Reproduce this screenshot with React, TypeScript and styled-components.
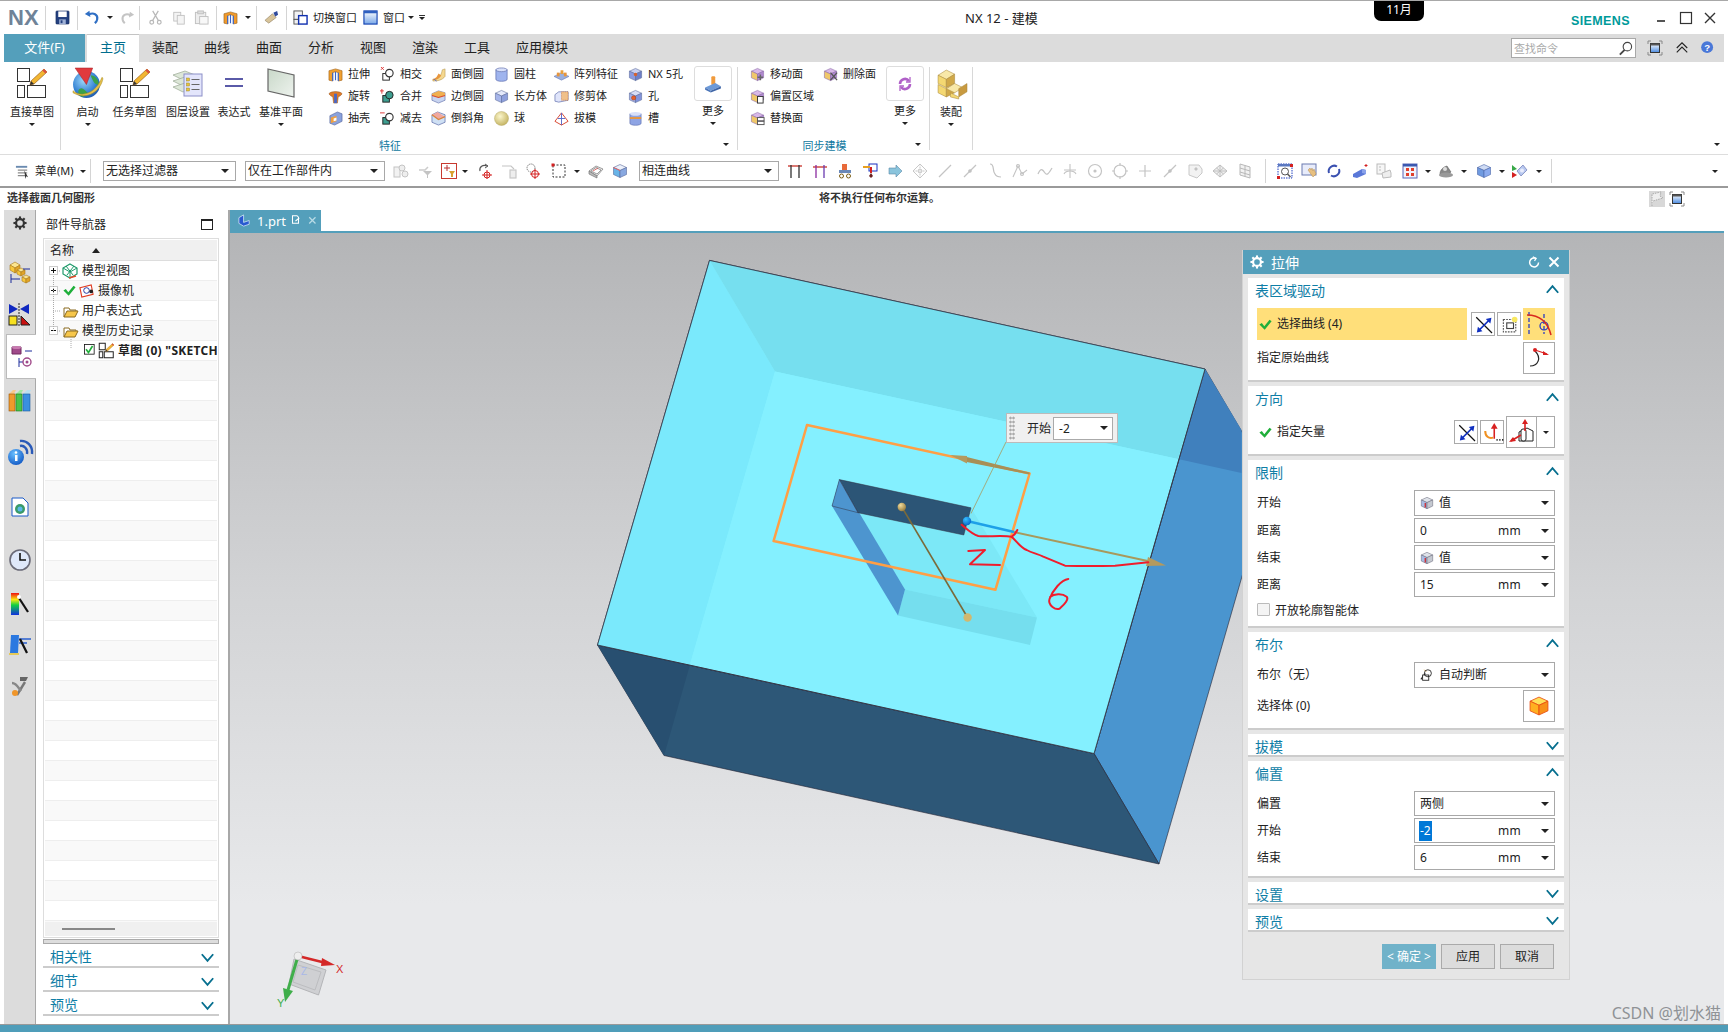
import React from "react";
import styled, { createGlobalStyle } from "styled-components";

const Global = createGlobalStyle`
  html, body { margin: 0; padding: 0; background: #fff; }
  * { box-sizing: border-box; }
  body { font-family: "Noto Sans", "Noto Sans CJK SC", sans-serif; color: #222; }
`;

const Frame = styled.div`
  width: 1728px; height: 1032px; overflow: hidden; position: relative;
  display: flex; flex-direction: column; background: #fff; border-top: 1px solid #a8a8a8;
  font-family: "Noto Sans", "Noto Sans CJK SC", sans-serif;
`;
const TitleBar = styled.div`display: flex; align-items: center; height: 33px; padding: 0 12px 0 8px; flex: none;`;
const Logo = styled.div`width: 37px; font: bold 22px/33px "Liberation Sans", sans-serif; color: #6f8398;`;
const VSep = styled.div<{ $h?: number; $ml?: number }>`
  width: 1px; height: ${p => p.$h ?? 24}px; background: #d4d4d4; flex: none; margin-left: ${p => p.$ml ?? 0}px;
`;
const Slot = styled.div<{ $w: number; $ml?: number }>`
  width: ${p => p.$w}px; margin-left: ${p => p.$ml ?? 0}px; flex: none;
  display: flex; align-items: center; justify-content: center;
`;
const Caret = styled.i<{ $c?: string; $s?: number }>`
  display: block; flex: none; width: 0; height: 0;
  border-left: ${p => p.$s ?? 3}px solid transparent; border-right: ${p => p.$s ?? 3}px solid transparent;
  border-top: ${p => p.$s ?? 3}px solid ${p => p.$c ?? "#222"};
`;
const QuickText = styled.span<{ $w: number }>`width: ${p => p.$w}px; font-size: 11px; line-height: 14px; white-space: nowrap; flex: none;`;
const OverflowCaret = styled.div`display: flex; flex-direction: column; align-items: center; gap: 1px; width: 10px; &::before { content: ""; width: 6px; height: 1px; background: #333; }`;
const AppTitle = styled.div`margin-left: 538px; font-size: 13px; line-height: 18px; white-space: nowrap;`;
const RightGroup = styled.div`margin-left: auto; display: flex; align-items: center;`;
const Siemens = styled.div`font: bold 12.5px/16px "Liberation Sans", sans-serif; color: #009a9a; letter-spacing: 0.4px; margin-top: 7px; margin-right: 27px;`;
const WinBtn = styled.div<{ $ml?: number }>`margin-left: ${p => p.$ml ?? 0}px; display: flex;`;
const MonthBadge = styled.div`
  position: absolute; left: 1374px; top: -1px; width: 50px; height: 21px; background: #000; color: #fff;
  border-radius: 0 0 7px 7px; font-size: 12px; line-height: 20px; text-align: center;
`;

const TabRow = styled.div`
  height: 28px; margin: 0 4px; background: #dcdcdc; display: flex; align-items: stretch; flex: none;
`;
const FileTab = styled.div`width: 81px; margin-right: 2px; background: #549fbb; color: #fff; font-size: 13px; line-height: 26px; text-align: center;`;
const RibbonTab = styled.div<{ $active?: boolean; $w?: number }>`
  width: ${p => p.$w ?? 52}px; text-align: center; font-size: 13px; line-height: 25px;
  color: ${p => p.$active ? "#006e8e" : "#222"}; background: ${p => p.$active ? "#fff" : "transparent"};
  border-top: 1px solid ${p => p.$active ? "#c4c4c4" : "transparent"};
`;
const SearchBox = styled.div`
  margin: 4px 0 0 auto; width: 125px; height: 20px; background: #fff; border: 1px solid #a8a8a8;
  display: flex; align-items: center; justify-content: space-between; padding: 0 2px;
  font-size: 11px; color: #aaa;
`;
const TabTools = styled.div`display: flex; align-items: center; margin: 0 9px 0 11px; gap: 12px;`;

const Ribbon = styled.div`height: 93px; padding: 5px 0 4px 4px; display: flex; flex: none; border-bottom: 1px solid #ddd;`;
const Group = styled.div<{ $w?: number; $grow?: boolean; $plain?: boolean }>`
  width: ${p => p.$w ? p.$w + "px" : "auto"}; flex: ${p => p.$grow ? 1 : "none"}; display: flex; flex-direction: column;
  border-right: ${p => p.$plain ? "none" : "1px solid #d8d8d8"}; position: relative;
`;
const GroupBody = styled.div<{ $pl?: number }>`flex: 1; display: flex; padding-left: ${p => p.$pl ?? 0}px; min-height: 0;`;
const GroupFoot = styled.div`height: 10px; line-height: 12px; font-size: 11px; color: #0f78a0; text-align: center; position: relative; padding-right: 18px;`;
const Launcher = styled.div`position: absolute; right: 8px; top: 3px;`;
const Big = styled.div<{ $w: number; $ml?: number }>`
  width: ${p => p.$w}px; margin-left: ${p => p.$ml ?? 0}px; flex: none; display: flex; flex-direction: column; align-items: center; padding-top: 1px;
`;
const BigIcon = styled.div`height: 30px; display: flex; align-items: center; justify-content: center;`;
const BigText = styled.div`font-size: 11px; line-height: 14px; margin-top: 7px; white-space: nowrap;`;
const BigCaret = styled.div`margin-top: 4px;`;
const SmallCol = styled.div<{ $w: number; $ml?: number }>`
  width: ${p => p.$w}px; margin-left: ${p => p.$ml ?? 0}px; flex: none; display: flex; flex-direction: column; gap: 8px;
`;
const SmallCmd = styled.div`height: 14px; display: flex; align-items: center; gap: 5px; font-size: 11px; line-height: 14px; white-space: nowrap;`;
const MoreBtn = styled.div<{ $w: number }>`width: ${p => p.$w}px; margin-top: -1px; flex: none; display: flex; flex-direction: column; align-items: center;`;
const MoreBox = styled.div`width: 100%; height: 35px; border: 1px solid #ddd; border-radius: 3px; display: flex; align-items: center; justify-content: center;`;
const MoreText = styled.div`font-size: 11px; line-height: 14px; margin-top: 3px;`;

const Toolbar = styled.div`
  height: 33px; display: flex; align-items: center; padding: 1px 0 0 15px; flex: none; border-bottom: 2px solid #9a9a9a;
`;
const MenuText = styled.span`font-size: 11px; line-height: 14px; margin-left: 5px; width: 41px; white-space: nowrap;`;
const ToolCombo = styled.div<{ $w: number; $ml?: number }>`
  width: ${p => p.$w}px; margin-left: ${p => p.$ml ?? 0}px; height: 20px; flex: none; border: 1px solid #a8a8a8; background: #fff;
  display: flex; align-items: center; justify-content: space-between; padding: 0 6px 0 2px; font-size: 12px; line-height: 16px;
`;
const ToolEnd = styled.div`margin-left: auto; margin-right: 10px;`;

const StatusRow = styled.div`height: 22px; flex: none; padding: 0 43px 0 7px; display: flex; align-items: center; font-size: 11px; font-weight: 700; color: #333;`;
const StatusText = styled.span<{ $w?: number }>`width: ${p => p.$w ? p.$w + "px" : "auto"}; white-space: nowrap; margin-top: -4px;`;
const StatusIcons = styled.div`margin-left: auto; display: flex; gap: 4px;`;

const Main = styled.div`flex: 1; min-height: 0; display: flex; padding: 0 4px;`;
const Strip = styled.div`width: 32px; flex: none; background: #dcdcdc; border-right: 1px solid #a8a8a8; display: flex; flex-direction: column; align-items: center;`;
const StripItem = styled.div<{ $mt: number; $h?: number; $active?: boolean }>`
  width: ${p => p.$active ? 30 : 32}px; height: ${p => p.$h ?? 32}px; margin-top: ${p => p.$mt}px; flex: none;
  display: flex; align-items: center; justify-content: center; align-self: ${p => p.$active ? "flex-end" : "center"};
  background: ${p => p.$active ? "#fff" : "transparent"};
  ${p => p.$active ? "border: 1px solid #bbb; border-right: none; margin-right: -1px;" : ""}
`;
const Nav = styled.div`width: 194px; flex: none; display: flex; flex-direction: column; border-right: 2px solid #a8a8a8;`;
const NavTitle = styled.div`height: 28px; flex: none; display: flex; align-items: center; justify-content: space-between; padding: 0 15px 0 10px; font-size: 12px;`;
const MaxSquare = styled.div`width: 12px; height: 11px; border: 1px solid #222; border-top-width: 2px;`;
const Tree = styled.div`position: relative; flex: none; height: 700px; margin: 0 9px 0 7px; border: 1px solid #ddd; display: flex; flex-direction: column; overflow: hidden; padding: 1px;`;
const TreeHead = styled.div`height: 21px; flex: none; background: #f0f0f0; border-bottom: 1px solid #ddd; display: flex; align-items: center; padding-left: 5px; gap: 18px; font-size: 12px;`;
const UpTri = styled.i`width: 0; height: 0; border-left: 4px solid transparent; border-right: 4px solid transparent; border-bottom: 5px solid #222;`;
const Rows = styled.div`flex: 1; min-height: 0; overflow: hidden;`;
const Row = styled.div<{ $odd: boolean }>`
  height: 20px; background: ${p => p.$odd ? "#f9f9f9" : "#fff"}; border-bottom: 1px solid #eee;
  display: flex; align-items: center; font-size: 12px; line-height: 14px; white-space: nowrap; overflow: hidden;
`;
const Pad = styled.span<{ $w: number }>`width: ${p => p.$w}px; flex: none; display: flex; align-items: center;`;
const Expand = styled.span`width: 9px; height: 9px; border: 1px solid #ccc; background: #fff; position: relative; display: block; font-size: 0;
  &::before { content: ""; position: absolute; left: 1px; right: 1px; top: 3px; height: 1px; background: #111; }`;
const ExpandPlus = styled(Expand)`&::after { content: ""; position: absolute; top: 1px; bottom: 1px; left: 3px; width: 1px; background: #111; }`;
const SketchText = styled.span`font-weight: 700; letter-spacing: 0.3px;`;
const TreeLines = styled.svg`position: absolute; left: 0; top: 0; pointer-events: none;`;
const ScrollRow = styled.div`height: 14px; flex: none; background: #f0f0f0; display: flex; align-items: center; padding-left: 17px;`;
const Thumb = styled.div`width: 53px; height: 2px; background: #888;`;
const SplitBar = styled.div`height: 5px; flex: none; margin: 1px 9px 0 7px; background: #ddd; border: 1px solid #aaa;`;
const NavSection = styled.div`
  height: 24px; flex: none; margin: 0 9px 0 7px; border-bottom: 2px solid #ccc; display: flex; align-items: center; justify-content: space-between;
  padding: 4px 5px 0 7px; font-size: 14px; line-height: 20px; color: #0f7ea6;
`;

const Right = styled.div`flex: 1; min-width: 0; display: flex; flex-direction: column;`;
const DocTabs = styled.div`height: 23px; flex: none; display: flex; border-bottom: 2px solid #549fbb;`;
const DocTab = styled.div`width: 91px; height: 21px; background: #549fbb; color: #fff; display: flex; align-items: center; gap: 5px; padding-left: 7px; font-size: 13px;`;
const View = styled.div`flex: 1; min-height: 0; position: relative; background: linear-gradient(180deg, #b4b5b7 0%, #d2d3d5 45%, #e8e9eb 85%, #e8e9eb 100%); overflow: hidden;`;
const Canvas = styled.svg`position: absolute; left: 0; top: 0; display: block;`;
const Watermark = styled.div`position: absolute; right: 3px; bottom: 1px; font-size: 16px; line-height: 20px; color: #8f9296;`;
const Bottom = styled.div`height: 8px; flex: none; background: #4f9db9; border-top: 1px solid #999;`;

const Popup = styled.div`
  position: absolute; left: 776px; top: 180px; width: 112px; height: 30px; background: #f0f0f0; border: 1px solid #bbb;
  display: flex; align-items: center; font-size: 12px; padding: 0 4px 0 2px;
`;
const Grip = styled.div`width: 6px; height: 24px; background-image: radial-gradient(#aaa 1px, transparent 1.2px); background-size: 3px 4px; margin-right: 12px;`;
const PopupField = styled.div`margin-left: 2px; flex: 1; height: 23px; border: 1px solid #aaa; background: #fff; display: flex; align-items: center; justify-content: space-between; padding: 0 4px 0 5px;`;

const Dialog = styled.div`
  position: absolute; left: 1012px; top: 17px; width: 328px; height: 730px; background: #e6e6e6; border: 1px solid #d2d2d2; border-top: none;
  display: flex; flex-direction: column;
`;
const DlgHead = styled.div`height: 24px; flex: none; background: #549fbb; color: #fff; display: flex; align-items: center; padding: 0 9px 0 7px; gap: 7px; font-size: 14px;`;
const DlgHeadIcons = styled.div`margin-left: auto; display: flex; gap: 7px; align-items: center;`;
const DlgBody = styled.div`padding: 4px 5px 0; display: flex; flex-direction: column; gap: 4px;`;
const Section = styled.div`background: #fff; border-bottom: 2px solid #ccc; display: flex; flex-direction: column;`;
const SecHead = styled.div<{ $closed?: boolean }>`
  height: ${p => p.$closed ? 21 : 26}px; line-height: 26px; flex: none; padding: 0 5px 0 7px; display: flex; justify-content: space-between;
  font-size: 14px; color: #0f7ea6;
`;
const SecIcon = styled.div`height: 26px; display: flex; align-items: center; margin-top: -2px;`;
const SecBody = styled.div<{ $pb: number }>`padding: 4px 9px ${p => p.$pb}px; display: flex; flex-direction: column; gap: 2px;`;
const FormRow = styled.div<{ $h: number }>`height: ${p => p.$h}px; display: flex; align-items: center; font-size: 12px; line-height: 16px; gap: 2px;`;
const RowLabel = styled.span`margin-right: auto; white-space: nowrap;`;
const Highlight = styled.div`width: 210px; height: 32px; background: #ffdf7a; display: flex; align-items: center; padding-left: 2px; gap: 5px; margin-right: 2px; font-size: 12px;`;
const CheckLabel = styled.div`display: flex; align-items: center; gap: 5px; padding-left: 2px; margin-right: auto;`;
const IconBtn = styled.div<{ $s?: number; $yellow?: boolean; $h?: number }>`
  width: ${p => p.$s ?? 24}px; height: ${p => p.$h ?? 24}px; flex: none; display: flex; align-items: center; justify-content: center;
  background: ${p => p.$yellow ? "#ffdf7a" : "#fff"}; border: 1px solid ${p => p.$yellow ? "#ffdf7a" : "#aaa"};
`;
const SplitBtn = styled.div`height: 32px; width: 49px; flex: none; border: 1px solid #aaa; display: flex; align-items: stretch;`;
const SplitMain = styled.div`flex: 1; display: flex; align-items: center; justify-content: center; border-right: 1px solid #aaa;`;
const SplitArrow = styled.div`width: 17px; display: flex; align-items: center; justify-content: center;`;
const Field = styled.div`
  width: 141px; height: 100%; flex: none; border: 1px solid #a8a8a8; background: #fff; display: flex; align-items: center; padding: 0 5px 0 5px; gap: 5px; font-size: 12px;
`;
const FieldMain = styled.span`flex: 1; display: flex; align-items: center; gap: 5px; white-space: nowrap; height: 100%;`;
const Unit = styled.span`width: 38px; font-size: 12px; letter-spacing: 0.3px;`;
const Sel = styled.span`background: #0078d7; color: #fff; padding: 0 1px; line-height: 20px; margin-left: -1px;`;
const CheckRow = styled.div`display: flex; align-items: center; gap: 5px; margin-top: 4px; height: 13px; font-size: 12px;`;
const CheckBox = styled.span`width: 13px; height: 13px; border: 1px solid #bbb; background: #f4f4f4; border-radius: 1px;`;
const DlgFoot = styled.div`margin: 12px 0 0 0; padding-right: 15px; display: flex; justify-content: flex-end; gap: 5px;`;
const Btn = styled.div<{ $primary?: boolean }>`
  width: 54px; height: 25px; text-align: center; font-size: 12px; line-height: 23px;
  background: ${p => p.$primary ? "#70b2c9" : "#dcdcdc"}; color: ${p => p.$primary ? "#fff" : "#222"};
  border: 1px solid ${p => p.$primary ? "#70b2c9" : "#aaa"};
`;

const Svg = styled.svg`display: block; flex: none; overflow: visible;`;
const Ic: React.FC<{ s?: number; v?: number; children: React.ReactNode }> = ({ s = 16, v = 16, children }) => (
  <Svg width={s} height={s} viewBox={`0 0 ${v} ${v}`} fill="none">{children}</Svg>
);

const Cube: React.FC<{ t: string; l: string; r: string; k?: string }> = ({ t, l, r, k = "#5a6a9a" }) => (
  <g stroke={k} strokeWidth="0.6" strokeLinejoin="round">
    <polygon points="8,1.5 14.5,4.5 8,7.5 1.5,4.5" fill={t} />
    <polygon points="1.5,4.5 8,7.5 8,14.5 1.5,11.5" fill={l} />
    <polygon points="14.5,4.5 8,7.5 8,14.5 14.5,11.5" fill={r} />
  </g>
);
const Ring = () => <circle cx="10" cy="6.5" r="4" fill="#fff" stroke="#333" strokeWidth="1.2" />;
const SqBox = ({ f = "none" }: { f?: string }) => <rect x="3" y="7" width="7" height="7" fill={f} stroke="#222" strokeWidth="1" />;
const Pencil = () => <g><polygon points="27,1 30,4 17,16 13,17 14,13" fill="#f2b632" stroke="#a2661c" strokeWidth="0.7" /><polygon points="27,1 30,4 28.3,5.6 25.3,2.6" fill="#d9503f" /><polygon points="14,13 17,16 13,17" fill="#333" /></g>;
const SketchBig = () => (
  <Ic s={30} v={30}>
    <rect x="0.5" y="0.5" width="12" height="13" stroke="#333" />
    <rect x="0.5" y="17.5" width="7" height="12" stroke="#333" />
    <rect x="10.5" y="17.5" width="18" height="12" stroke="#333" />
    <Pencil />
  </Ic>
);
const GlobeBig = () => (
  <Ic s={31} v={30}>
    <defs><radialGradient id="gl" cx="0.4" cy="0.35" r="0.75"><stop offset="0" stopColor="#9fd8f8" /><stop offset="0.65" stopColor="#2f7ed2" /><stop offset="1" stopColor="#1c4f9e" /></radialGradient></defs>
    <circle cx="14" cy="16" r="13" fill="url(#gl)" />
    <path d="M6 22c3-5 6-1 10 3l-6 3c-3-1-4-3-4-6zM18 7c4 0 8 4 8 9-4 1-6-4-8-9z" fill="#3aa14a" />
    <path d="M1 22c8 7 22 3 28-13l1 1c-2 12-15 22-29 14z" fill="#e6c04a" stroke="#a88a20" strokeWidth="0.5" />
    <polygon points="3,0 20,0 14,16" fill="#e03a3e" stroke="#a31c22" strokeWidth="0.5" />
  </Ic>
);
const LayersBig = () => (
  <Ic s={30} v={30}>
    {[3, 9, 15].map(y => <polygon key={y} points={`0,${y + 4} 12,${y} 22,${y + 4} 10,${y + 9}`} fill="#dde7d8" stroke="#9aa794" strokeWidth="0.7" />)}
    <rect x="11" y="6" width="18" height="22" fill="#e3e5fb" stroke="#8c8fc8" />
    {[10, 15, 20].map(y => <g key={y}><rect x="13.5" y={y} width="3" height="3" fill="#e7c43e" stroke="#8c7a20" strokeWidth="0.4" /><rect x="18.5" y={y + 1} width="8" height="1" fill="#666" /></g>)}
  </Ic>
);
const EqBig = () => <Ic s={18} v={18}><rect x="0" y="4" width="18" height="2" fill="#5a5aa8" /><rect x="0" y="11" width="18" height="2" fill="#5a5aa8" /></Ic>;
const PlaneBig = () => (
  <Ic s={30} v={30}>
    <defs><linearGradient id="pl" x1="0" y1="0" x2="1" y2="1"><stop offset="0" stopColor="#c9d8c9" /><stop offset="1" stopColor="#eef3ee" /></linearGradient></defs>
    <polygon points="2,1 28,7 28,29 2,23" fill="url(#pl)" stroke="#666" strokeWidth="1.2" />
  </Ic>
);
const AsmBig = () => (
  <Ic s={31} v={30}>
    <g stroke="#a8873a" strokeWidth="0.5">
      <polygon points="2,7 10,2 18,6 10,11" fill="#f8e8a8" /><polygon points="2,7 10,11 10,19 2,15" fill="#f4d872" /><polygon points="18,6 10,11 10,19 18,15" fill="#d0a848" />
      <polygon points="2,16 10,20 10,28 2,24" fill="#f4d872" /><polygon points="10,20 18,16 18,24 10,28" fill="#d0a848" />
      <polygon points="10,20 18,15 26,19 18,24" fill="#f8e8a8" /><polygon points="18,24 26,19 26,27 18,32" fill="#c89a40" transform="translate(4 -4)" />
      <polygon points="14,24 22,28 22,30 14,28" fill="#f4d872" />
    </g>
  </Ic>
);

const icons: Record<string, React.ReactNode> = {
  extrude: <g stroke="#9a5a10" strokeWidth="0.6"><path d="M1 4l7-2 7 2v10l-4 1V6L8 5 5 6v9l-4-1z" fill="#f0a030" /><path d="M5 6v9M8 5v9M11 6v9" stroke="#3a66c8" strokeWidth="1.2" /></g>,
  revolve: <g><path d="M1 5c2-3 12-3 14 0-1 2-3 3-4 3l-1 7H6L5 8C4 8 2 7 1 5z" fill="#e07a28" stroke="#8a4a14" strokeWidth="0.5" /><rect x="6.5" y="5" width="3" height="10" fill="#4a68c4" /></g>,
  shell: <g><polygon points="2,5 10,1 15,3 15,11 7,15 2,13" fill="#8aa2dc" stroke="#4a5a94" strokeWidth="0.6" /><polygon points="3,7 9,5 9,11 3,13" fill="#f0a040" /><polygon points="6,8 9,7 9,10 6,11" fill="#fff" /></g>,
  intersect: <g><path d="M1 0l3 3M4 0L1 3" stroke="#d33" /><SqBox /><Ring /></g>,
  unite: <g><path d="M2 0v5M0 2h4" stroke="#d33" /><SqBox f="#3e9e90" /><circle cx="10" cy="6.5" r="4" fill="#3e9e90" stroke="#222" /></g>,
  subtract: <g><path d="M0 2h5" stroke="#d33" /><SqBox f="#3e9e90" /><Ring /></g>,
  faceblend: <g><path d="M2 13c5 1 9-3 10-10l3-1v8c-3 4-8 5-13 5z" fill="#f5d890" stroke="#a88a40" strokeWidth="0.5" /><path d="M2 13c4-1 5-4 6-6l3 2c-2 3-5 5-9 5z" fill="#e8963c" /><path d="M3 13l3 2" stroke="#5a6ac4" /></g>,
  edgeblend: <g><polygon points="1,5 8,2 15,4 15,12 8,15 1,12" fill="#c8d4f0" stroke="#5060a0" strokeWidth="0.6" /><path d="M1 5l7-3 7 2v3l-7 2-7-2z" fill="#f0b050" /><path d="M1 7l7 2 7-2" stroke="#d84a2c" strokeWidth="1.2" /></g>,
  chamfer: <g><polygon points="1,4 7,1 15,4 15,12 8,15 1,12" fill="#cfe0f4" stroke="#5060a0" strokeWidth="0.7" /><polygon points="1,4 7,1 15,6 8,9" fill="#f0a8a0" /><path d="M1 4l7 5 7-3" stroke="#d8843c" strokeWidth="1.3" /></g>,
  cylinder: <g><path d="M2 3v10c0 3 12 3 12 0V3z" fill="#9fb4ee" stroke="#5868a8" strokeWidth="0.7" /><ellipse cx="8" cy="3" rx="6" ry="2" fill="#d8e0fa" stroke="#5868a8" strokeWidth="0.7" /></g>,
  block: <Cube t="#e4e9fa" l="#a6b5ea" r="#8d9fdc" />,
  sphere: <g><defs><radialGradient id="sp" cx="0.4" cy="0.35" r="0.7"><stop offset="0" stopColor="#fbf6cc" /><stop offset="1" stopColor="#c2b15e" /></radialGradient></defs><circle cx="8" cy="8" r="7.5" fill="url(#sp)" stroke="#a99c54" strokeWidth="0.4" /></g>,
  pattern: <g><polygon points="0,10 8,6 16,10 8,14" fill="#9ab0e0" stroke="#5868a8" strokeWidth="0.5" /><rect x="3" y="6" width="3" height="4" fill="#e8963c" /><rect x="7" y="3.5" width="3" height="4" fill="#e8a03c" /><rect x="10.5" y="6" width="3" height="4" fill="#e8963c" /></g>,
  trim: <g><polygon points="1,6 5,3 15,3 15,12 5,14 1,13" fill="#dfe4fa" stroke="#5868a8" strokeWidth="0.7" /><rect x="8" y="3" width="7" height="9" fill="#f0c08a" stroke="#c46a2a" strokeDasharray="1 1" strokeWidth="0.7" /></g>,
  draft: <g><polygon points="1,11 8,2 15,11 8,15" fill="#fff" stroke="#d8432c" strokeWidth="1" /><path d="M8 2v13" stroke="#5868c8" /><path d="M4 8h8" stroke="#5868c8" /></g>,
  nx5: <g><Cube t="#c8cff0" l="#8b9ae0" r="#6f80c8" /><circle cx="8" cy="8" r="1.8" fill="#d8602c" /></g>,
  hole: <g><Cube t="#d8def8" l="#a4b2ea" r="#8294dc" /><circle cx="6" cy="9.5" r="2.3" fill="#e8602c" stroke="#a03a16" strokeWidth="0.5" /></g>,
  slot: <g><path d="M2 3v10c0 3 12 3 12 0V3z" fill="#8ea4e4" stroke="#5868a8" strokeWidth="0.6" /><ellipse cx="8" cy="3" rx="6" ry="2" fill="#d8e0fa" /><rect x="2" y="6.5" width="12" height="2" fill="#e8963c" /></g>,
  moveface: <g><Cube t="#d8b8e8" l="#f0c86a" r="#b088d0" k="#8a6aa8" /><path d="M11 8v6M8 11h6" stroke="#666" strokeWidth="1.6" /></g>,
  offsetarea: <g><Cube t="#d8b8e8" l="#f0c86a" r="#b088d0" k="#8a6aa8" /><rect x="8" y="8" width="6" height="7" fill="#fff" stroke="#333" /></g>,
  replace: <g><Cube t="#d8b8e8" l="#f0c86a" r="#b088d0" k="#8a6aa8" /><rect x="8" y="7" width="7" height="3.5" fill="#fff" stroke="#555" /><rect x="8" y="11" width="7" height="3.5" fill="#fff" stroke="#555" /></g>,
  delface: <g><Cube t="#d8b8e8" l="#f0c86a" r="#b088d0" k="#8a6aa8" /><path d="M8 6l7 8M15 6l-7 8" stroke="#555" strokeWidth="1.5" /></g>,
  moreA: <g><rect x="6.5" y="1" width="3.5" height="8" rx="1" fill="#f09a3c" /><polygon points="1,11 10,7 15,10 6,14" fill="#6d9ad8" /><polygon points="1,11 6,14 6,15.5 1,13" fill="#4a74b8" /><polygon points="6,14 15,10 15,12 6,15.5" fill="#3f65a6" /></g>,
  moreB: <g stroke="#b060c8" strokeWidth="2.6" fill="none"><path d="M3 8a5 5 0 0 1 9-3" /><path d="M13 8a5 5 0 0 1-9 3" /><path d="M13 1v5h-4M3 15v-5h4" strokeWidth="1.3" /></g>,

  save: <g><rect x="1" y="1" width="14" height="14" rx="1" fill="#24407f" stroke="#142a5c" strokeWidth="0.6" /><rect x="3.5" y="1.5" width="9" height="6" fill="#fff" /><rect x="4.5" y="10" width="7" height="5" fill="#9fb1d6" /><rect x="6" y="11" width="2" height="3" fill="#24407f" /></g>,
  undo: <g><path d="M4 5c5-3 10 0 9 5-.3 2-1.500 3-2.500 4" stroke="#2f6fc4" strokeWidth="2.300" /><polygon points="1,2 7,2 4,8" transform="rotate(-35 4 5)" fill="#2f6fc4" /></g>,
  redo: <g><path d="M12 5C7 2 2 5 3 10c.3 2 1.500 3 2.500 4" stroke="#c4c4c4" strokeWidth="2.300" /><polygon points="9,2 15,2 12,8" transform="rotate(35 12 5)" fill="#c4c4c4" /></g>,
  cut: <g stroke="#b8b8b8" strokeWidth="1.3"><path d="M11 1L5 11M5 1l6 10" /><circle cx="4" cy="13" r="2" /><circle cx="12" cy="13" r="2" /></g>,
  copy: <g stroke="#c0c0c0"><rect x="2" y="1.500" width="8" height="10" fill="#f4f4f4" /><rect x="6" y="5" width="8" height="10" fill="#f4f4f4" /></g>,
  paste: <g stroke="#c0c0c0"><rect x="1.500" y="2.500" width="11" height="12" fill="#eee" /><rect x="4" y="1" width="6" height="3" fill="#ddd" /><rect x="6" y="7" width="9" height="8" fill="#f8f8f8" /></g>,
  books: <g stroke="#7a4a10" strokeWidth="0.5"><path d="M1 4l7-2 7 2v10l-4 1V6L8 5 5 6v9l-4-1z" fill="#f09a2c" /><path d="M5 6v9M8 5v9M11 6v9" stroke="#3a66c8" strokeWidth="1.2" /></g>,
  brush: <g><polygon points="1,11 9,4 13,8 5,14" fill="#d8c49a" stroke="#7a6a4a" strokeWidth="0.5" /><polygon points="10,3 14,1 15,5 12,7" fill="#2f4a9c" /></g>,
  switch: <g><rect x="1" y="1" width="9" height="9" fill="#f2f2f2" stroke="#555" /><rect x="1" y="10" width="5" height="5" fill="#f2f2f2" stroke="#555" /><rect x="6" y="6" width="9" height="9" fill="#fff" stroke="#1030b0" strokeWidth="1.500" /></g>,
  window: <g><defs><linearGradient id="wn" x1="0" y1="0" x2="0" y2="1"><stop offset="0" stopColor="#fff" /><stop offset="1" stopColor="#7aa8e8" /></linearGradient></defs><rect x="1" y="1" width="14" height="14" fill="url(#wn)" stroke="#1040b0" strokeWidth="1.200" /><rect x="1" y="1" width="14" height="2.500" fill="#2f60c0" /></g>,

  menu: <g><rect x="1" y="2" width="12" height="2" fill="#6a8ab0" /><rect x="3" y="6" width="10" height="1" fill="#666" /><rect x="3" y="9" width="10" height="1" fill="#666" /><rect x="3" y="12" width="8" height="1" fill="#666" /><path d="M10 7l4 7-2-1-1 3z" fill="#333" /></g>,
  gA: <g stroke="#c4c4c4"><rect x="1" y="4" width="6" height="10" fill="#f2f2f2" /><circle cx="9" cy="5" r="3" fill="#eee" /><circle cx="12" cy="11" r="3" fill="#eee" /></g>,
  gB: <g><path d="M2 7h6l3-3" stroke="#ccc" strokeWidth="1.500" /><polygon points="6,8 15,8 11,12 11,15 10,15 10,12" fill="#c4c4c4" /></g>,
  selFilter: <g><rect x="0.500" y="0.500" width="15" height="15" fill="#fff" stroke="#c83a30" /><path d="M6 2v6M3 5h6" stroke="#b33" /><polygon points="8,8 14,8 12,11 12,14 10,14 10,11" fill="#d8a030" /></g>,
  crossRed: <g><path d="M3 8c-1-4 3-7 7-5" stroke="#555" strokeWidth="1.200" /><path d="M8 1l3 2-3 2" stroke="#555" /><circle cx="10" cy="12" r="3" stroke="#d42020" /><path d="M10 7v9M5 12h10" stroke="#d42020" /></g>,
  gC: <g stroke="#c4c4c4" strokeWidth="1.100"><path d="M1 3h9l3 3" /><rect x="9" y="7" width="6" height="8" fill="#eee" /></g>,
  dashCirc: <g><circle cx="6" cy="5" r="4" stroke="#555" strokeDasharray="1 1" /><circle cx="10" cy="11" r="3.500" stroke="#d42020" /><path d="M10 6v10M5 11h10" stroke="#d42020" /></g>,
  dashBox: <g><rect x="2" y="2" width="12" height="12" stroke="#333" strokeDasharray="2 1.500" /><rect x="0.500" y="0.500" width="3" height="3" fill="#d42020" /></g>,
  eraser: <g stroke="#777" strokeWidth="0.7"><polygon points="1,8 8,3 15,6 9,13" fill="#eee" /><polygon points="3,8 8,4.500 13,7 9,11" fill="#fff" /><path d="M5 8l5-3" stroke="#c33" /><path d="M1 8v3l8 4v-2z" fill="#bbb" /></g>,
  cubeBlue: <g><Cube t="#ecf1fc" l="#68b4e8" r="#88a8e0" /><path d="M8 7.500L1.500 4.500" stroke="#e66" /></g>,
  hA: <g stroke="#c83028" strokeWidth="1.300"><path d="M1 3h14" /><path d="M4 2v13M12 2v13" stroke="#333" /></g>,
  hB: <g strokeWidth="1.300"><path d="M1 4h14" stroke="#c83028" /><path d="M4 2v13" stroke="#8a2aa0" /><path d="M12 2v13" stroke="#6a3ab0" /></g>,
  hC: <g><rect x="5" y="1" width="5" height="6" fill="#e86a3a" /><rect x="2" y="7" width="12" height="3" fill="#6a88b8" /><circle cx="4.500" cy="13" r="2" stroke="#7a5a10" /><circle cx="11.500" cy="13" r="2" stroke="#7a5a10" /></g>,
  hD: <g><rect x="7" y="1" width="8" height="7" stroke="#1a30c0" /><rect x="1" y="3" width="7" height="2" fill="#e8a020" /><path d="M8 5h1v5" stroke="#d42020" strokeWidth="2" /><path d="M9 10l-2 3 2 2 2-2z" fill="#6a2020" /></g>,
  arrow: <polygon points="2,5 9,5 9,2 15,8 9,14 9,11 2,11" fill="#8ac4dc" stroke="#5a8aa8" strokeWidth="0.6" />,
  g4: <g stroke="#c8c8c8"><path d="M8 1v14M1 8h14" strokeDasharray="1.500 1" /><circle cx="8" cy="8" r="2" /><polygon points="8,1 15,8 8,15 1,8" /></g>,
  gLine: <path d="M2 14L14 2" stroke="#c4c4c4" strokeWidth="1.200" />,
  gLineP: <g stroke="#c4c4c4" strokeWidth="1.200"><path d="M2 14L14 2" /><circle cx="8" cy="8" r="1.200" fill="#bbb" /></g>,
  gS: <path d="M3 1c5 0 2 7 5 10 1 2 3 3 6 3" stroke="#c0c0c0" strokeWidth="1.200" />,
  gPoly: <g stroke="#c4c4c4" strokeWidth="1.100"><path d="M1 14L6 3l4 8 5-4" /><circle cx="6" cy="3" r="1.500" /><circle cx="10" cy="11" r="1.500" /></g>,
  gWave: <path d="M1 11c3-7 5-4 7-1 2 3 4 0 7-5" stroke="#c4c4c4" strokeWidth="1.300" />,
  gCross: <g stroke="#c4c4c4" strokeWidth="1.100"><path d="M8 1v14M2 7h12" /><path d="M2 11c2-4 10-4 12 0" /></g>,
  gCircD: <g stroke="#c4c4c4" strokeWidth="1.200"><circle cx="8" cy="8" r="6.500" /><circle cx="8" cy="8" r="1" fill="#c0c0c0" /></g>,
  gCircT: <g stroke="#c4c4c4" strokeWidth="1.200"><circle cx="8" cy="8" r="6" /><path d="M8 0v3M8 13v3M0 8h3M13 8h3" /></g>,
  gPlus: <path d="M8 2v12M2 8h12" stroke="#c4c4c4" strokeWidth="1.200" />,
  gFold: <g stroke="#c8c8c8"><path d="M2 2h10l3 4v4l-5 5-8-3z" fill="#f2f2f2" /><circle cx="9" cy="6" r="1.200" fill="#bbb" /></g>,
  gGrid: <g stroke="#bbb" strokeWidth="0.900"><polygon points="1,8 8,2 15,8 8,14" fill="#eee" /><path d="M4.500 5l7 6M8 2v12M11.500 5l-7 6M1 8h14" /></g>,
  gTable: <g stroke="#b8b8b8"><polygon points="3,1 13,4 13,15 3,12" fill="#f2f2f2" /><path d="M3 5l10 3M3 9l10 3M8 2.500v11" /></g>,
  zoomFit: <g><rect x="1" y="1" width="14" height="14" fill="#fff" stroke="#2040c0" strokeDasharray="1.500 1" /><rect x="1" y="1" width="14" height="2.500" fill="#5a78c0" /><circle cx="8" cy="8.500" r="3.500" stroke="#555" /><path d="M10.500 11l3 3" stroke="#555" strokeWidth="1.400" /><rect x="0" y="13" width="3" height="3" fill="#d42020" /><rect x="13" y="1" width="3" height="3" fill="#d42020" /></g>,
  pan: <g><rect x="1" y="1" width="14" height="11" fill="#e8ecfa" stroke="#6a7ab0" /><path d="M7 7l5 7 3-3-2-5-1 2-1-3-1 2-1-2z" fill="#e8c080" stroke="#a88040" strokeWidth="0.4" /></g>,
  rotate: <g stroke="#3a50b0" strokeWidth="2" fill="none"><path d="M3 10a5.500 5.500 0 0 1 8-6.500" /><path d="M13 6a5.500 5.500 0 0 1-8 6.500" /></g>,
  persp: <g><polygon points="1,11 10,6 14,7 14,11 5,15 1,14" fill="#5a78d8" /><polygon points="10,6 14,7 14,11 10,10" fill="#8aa2ea" /><path d="M14 1v3M12.500 2.500h3" stroke="#d42020" /></g>,
  gTab: <g stroke="#bbb"><rect x="1" y="1" width="8" height="10" fill="#f6f6f6" /><path d="M3 4h2M3 7h2" /><polygon points="6,10 14,7 15,10 15,14 7,15" fill="#eee" /></g>,
  fitRed: <g><rect x="1" y="1" width="14" height="14" fill="#f0f2fc" stroke="#5a68b8" /><rect x="1" y="1" width="14" height="2.500" fill="#3a58b0" /><g fill="#e0402c"><rect x="4" y="5" width="3" height="3" /><rect x="9" y="5" width="3" height="3" /><rect x="4" y="10" width="3" height="3" /><rect x="9" y="10" width="3" height="3" /></g></g>,
  render: <g><path d="M2 11c0-4 3-7 7-8l4 6c-3 3-7 4-11 2z" fill="#888" stroke="#555" strokeWidth="0.5" /><ellipse cx="8" cy="12" rx="7" ry="2.500" fill="#999" /><circle cx="7" cy="6" r="2" fill="#ddd" /></g>,
  cubeB2: <Cube t="#d0dcf4" l="#6f9ae0" r="#8aaaee" k="#4a64a8" />,
  diamond: <g><polygon points="5,8 11,2 15,7 9,13" fill="#b8c8f0" stroke="#5a68a8" strokeWidth="0.6" /><circle cx="10" cy="7.500" r="2" fill="#e8ecfc" /><polygon points="0,2 5,6 0,8" fill="#38a848" /><polygon points="0,9 5,12 0,15" fill="#d42020" /></g>,
  flagGray: <g><rect width="16" height="16" fill="#d8d8d8" /><path d="M3 15V3l9-2-1 4 3 2-10 3" stroke="#aaa" fill="#eee" strokeDasharray="1.500 1" /></g>,
  fullscreen: <g><path d="M1 4V1h3M12 1h3v3M15 12v3h-3M4 15H1v-3" stroke="#888" /><defs><linearGradient id="fs" x1="0" y1="0" x2="0" y2="1"><stop offset="0" stopColor="#fff" /><stop offset="1" stopColor="#4a8ae0" /></linearGradient></defs><rect x="3.500" y="3.500" width="9" height="9" fill="url(#fs)" stroke="#333" /><rect x="3.500" y="3.500" width="9" height="2" fill="#555" /></g>,
};

const I: React.FC<{ n: string; s?: number }> = ({ n, s = 16 }) => <Ic s={s}>{icons[n]}</Ic>;

const Gear: React.FC<{ c: string; s?: number }> = ({ c, s = 14 }) => (
  <Ic s={s}>
    <circle cx="8" cy="8" r="4.500" stroke={c} strokeWidth="2.500" />
    {[0, 45, 90, 135, 180, 225, 270, 315].map(a => <rect key={a} x="6.800" y="0.500" width="2.400" height="3" fill={c} transform={`rotate(${a} 8 8)`} />)}
  </Ic>
);
const Chevron: React.FC<{ up?: boolean }> = ({ up }) => (
  <Ic s={13}><path d={up ? "M1 12L8 4l7 8" : "M1 4l7 8 7-8"} stroke="#066f8f" strokeWidth="2.300" /></Ic>
);
const Check: React.FC<{ s?: number }> = ({ s = 13 }) => <Ic s={s}><polygon points="0.500,8 3.500,6 6.500,10 13,2 15.500,4 7,14.500" fill="#1faf3a" /></Ic>;
const SwapIcon = () => (
  <Ic s={18}><path d="M2 2l14 14" stroke="#111" strokeWidth="1.100" /><path d="M5 13L13 5" stroke="#1030c0" strokeWidth="1.300" /><polygon points="15.500,2.500 10.500,3.500 14.500,7.500" fill="#1030c0" /><polygon points="2.500,15.500 7.500,14.500 3.500,10.500" fill="#1030c0" /></Ic>
);

type SC = [string, string];
const Small: React.FC<{ c: SC }> = ({ c }) => <SmallCmd><I n={c[0]} s={15} />{c[1]}</SmallCmd>;
const colsA: [number, SC[]][] = [
  [52, [["extrude", "拉伸"], ["revolve", "旋转"], ["shell", "抽壳"]]],
  [51, [["intersect", "相交"], ["unite", "合并"], ["subtract", "减去"]]],
  [63, [["faceblend", "面倒圆"], ["edgeblend", "边倒圆"], ["chamfer", "倒斜角"]]],
  [60, [["cylinder", "圆柱"], ["block", "长方体"], ["sphere", "球"]]],
  [74, [["pattern", "阵列特征"], ["trim", "修剪体"], ["draft", "拔模"]]],
  [66, [["nx5", "NX 5孔"], ["hole", "孔"], ["slot", "槽"]]],
];
const colsB: [number, SC[]][] = [
  [73, [["moveface", "移动面"], ["offsetarea", "偏置区域"], ["replace", "替换面"]]],
  [63, [["delface", "删除面"]]],
];
type T = [string, number?, number?];
const toolsA: T[] = [["gA", 24, 4], ["gB", 24], ["selFilter", 24], ["^", 8], ["crossRed", 24, 4], ["gC", 24], ["dashCirc", 24], ["dashBox", 24, 2], ["^", 12], ["eraser", 24, 1], ["cubeBlue", 24]];
const toolsB: T[] = ["hA", "hB", "hC", "hD", "arrow", "g4", "gLine", "gLineP", "gS", "gPoly", "gWave", "gCross", "gCircD", "gCircT", "gPlus", "gLineP", "gFold", "gGrid", "gTable"].map(n => [n, 25] as T);
const toolsC: T[] = [["zoomFit", 24, 7], ["pan", 24], ["rotate", 24, 1], ["persp", 24, 2], ["gTab", 24], ["fitRed", 24, 2], ["^", 12], ["render", 24], ["^", 12], ["cubeB2", 24, 2], ["^", 12], ["diamond", 24], ["^", 14]];
const Tools: React.FC<{ list: T[] }> = ({ list }) => (
  <>{list.map(([n, w = 24, ml = 0], i) => <Slot key={i} $w={w} $ml={ml}>{n === "^" ? <Caret /> : <I n={n} s={16} />}</Slot>)}</>
);

const FolderIcon = () => (
  <Ic s={16}><path d="M1 14V5h5l1 2h6v2" fill="#fff" stroke="#8a6a20" /><path d="M1 14l3-6h11l-3 6z" fill="#f6c64a" stroke="#8a6a20" /></Ic>
);
const treeRows = [
  <><Pad $w={4} /><ExpandPlus /><Pad $w={4} /><Ic s={16}><polygon points="8,1 15,5 15,11 8,15 1,11 1,5" stroke="#1f9a6a" strokeWidth="1.200" /><path d="M1 5l7 4 7-4M8 9v6M4 3l7 9M12 3L5 12" stroke="#1f9a6a" /><path d="M7 15l7-2" stroke="#e64a2a" strokeWidth="1.500" /></Ic><Pad $w={4} />模型视图</>,
  <><Pad $w={4} /><ExpandPlus /><Pad $w={5} /><Check /><Pad $w={3} /><Ic s={15}><polygon points="1,5 13,2 15,12 3,15" stroke="#e03a20" strokeWidth="1.200" fill="#fff" /><circle cx="8" cy="8" r="3" stroke="#1a30a0" /><circle cx="13" cy="9" r="2" fill="#222" /></Ic><Pad $w={4} />摄像机</>,
  <><Pad $w={18} /><FolderIcon /><Pad $w={3} />用户表达式</>,
  <><Pad $w={4} /><Expand /><Pad $w={5} /><FolderIcon /><Pad $w={3} />模型历史记录</>,
  <><Pad $w={39} /><Ic s={13}><rect x="0.500" y="0.500" width="12" height="12" stroke="#111" fill="#fff" /><path d="M2.500 6.500l3 4 5-8" stroke="#1faf3a" strokeWidth="2" /></Ic><Pad $w={2} /><Ic s={15} v={30}><rect x="0.500" y="0.500" width="12" height="13" stroke="#222" strokeWidth="2" /><rect x="0.500" y="17.500" width="7" height="12" stroke="#222" strokeWidth="2" /><rect x="10.500" y="17.500" width="18" height="12" stroke="#222" strokeWidth="2" /><Pencil /></Ic><Pad $w={4} /><SketchText>草图 (0) "SKETCH</SketchText></>,
];

const Strips: { mt: number; h?: number; active?: boolean; el: React.ReactNode }[] = [
  { mt: 0, h: 26, el: <Gear c="#333" s={14} /> },
  { mt: 20, el: <Ic s={24} v={24}><g stroke="#a8781c" strokeWidth="0.6"><polygon points="2,5 7,2 12,5 7,8" fill="#fbe58e" /><polygon points="2,5 7,8 7,13 2,10" fill="#f8c83c" /><polygon points="12,5 7,8 7,13 12,10" fill="#e0a428" /><polygon points="9,10 13,8 17,10 13,12" fill="#fbe58e" /><polygon points="9,10 13,12 13,16 9,14" fill="#f8c83c" /><polygon points="17,10 13,12 13,16 17,14" fill="#e0a428" /><polygon points="14,17 18,15 22,17 18,19" fill="#fbe58e" /><polygon points="14,17 18,19 18,23 14,21" fill="#f8c83c" /><polygon points="22,17 18,19 18,23 22,21" fill="#e0a428" /></g><path d="M3 14v9M3 19h9M15 9h7" stroke="#1a2a9a" strokeWidth="1" /></Ic> },
  { mt: 11, el: <Ic s={24} v={24}><polygon points="1,1 10,6 1,11" fill="#1028c0" /><polygon points="21,1 12,6 21,11" fill="#1028c0" /><path d="M11 0v24" stroke="#222" strokeDasharray="2 1" /><rect x="1" y="13" width="8" height="9" fill="#f6e020" stroke="#222" /><polygon points="13,22 13,13 22,22" fill="#c81010" stroke="#222" /></Ic> },
  { mt: 3, h: 45, active: true, el: <Ic s={24} v={24}><path d="M2 2h9v7H2z" fill="#a04a8a" stroke="#702a60" /><ellipse cx="6.500" cy="2.500" rx="4.500" ry="1.500" fill="#c87ab0" /><path d="M15 6h7M9 13v9M9 17h4" stroke="#1a2a9a" /><circle cx="17" cy="17" r="4" stroke="#a04a8a" strokeWidth="1.400" /><circle cx="17" cy="17" r="1.500" fill="#a04a8a" /></Ic> },
  { mt: 5, el: <Ic s={24} v={24}><path d="M1 6l4-4h3L6 6z" fill="#f8c88a" /><rect x="1" y="6" width="6" height="17" fill="#f09a2c" stroke="#96560c" strokeWidth="0.6" /><path d="M8 6l4-4h3l-2 4z" fill="#a0e8a0" /><rect x="8" y="6" width="6" height="17" fill="#4ac44a" stroke="#1a7a1a" strokeWidth="0.6" /><path d="M15 6l4-4h4l-2 4z" fill="#b8e0f0" /><rect x="15" y="6" width="7" height="17" fill="#3a90e0" stroke="#1a5aa0" strokeWidth="0.6" /></Ic> },
  { mt: 21, el: <Ic s={26} v={26}><defs><radialGradient id="inf" cx="0.4" cy="0.3" r="0.8"><stop offset="0" stopColor="#6ac0ff" /><stop offset="1" stopColor="#0a50c0" /></radialGradient></defs><path d="M13 6c4-1 8 3 7 8M13 1c7-1 13 5 12 13" stroke="#2a5ab8" strokeWidth="2.400" /><circle cx="9" cy="17" r="8" fill="url(#inf)" /><rect x="8" y="15" width="2.500" height="6" fill="#fff" /><circle cx="9" cy="12.500" r="1.300" fill="#fff" /></Ic> },
  { mt: 22, el: <Ic s={20} v={20}><path d="M2 1h11l5 5v13H2z" fill="#fff" stroke="#1a5ac8" /><circle cx="10" cy="12" r="5" fill="#3a9a6a" /><circle cx="10" cy="12" r="2.500" fill="#5ab8e8" /></Ic> },
  { mt: 21, el: <Ic s={22} v={22}><circle cx="11" cy="11" r="10" fill="#dfe8fa" stroke="#6a6a78" strokeWidth="1.600" /><path d="M11 4v7h6" stroke="#111" strokeWidth="1.600" /></Ic> },
  { mt: 12, el: <Ic s={22} v={22}><defs><linearGradient id="rb" x1="0" y1="0" x2="0" y2="1"><stop offset="0" stopColor="#f01010" /><stop offset="0.3" stopColor="#f8e810" /><stop offset="0.55" stopColor="#10d040" /><stop offset="1" stopColor="#1030e0" /></linearGradient></defs><rect x="2" y="0" width="8" height="22" fill="url(#rb)" /><path d="M10 5l9 14" stroke="#111" strokeWidth="2.200" /><circle cx="10" cy="4" r="2" fill="#fff" /></Ic> },
  { mt: 9, el: <Ic s={24} v={24}><path d="M3 2h8l-1 18H2z" fill="#2a78e0" /><path d="M11 6h12M11 10h8" stroke="#2a60d0" strokeWidth="1.400" /><path d="M12 6l7 14" stroke="#111" strokeWidth="2.200" /><path d="M1 21h10" stroke="#e8c020" strokeWidth="1.400" /></Ic> },
  { mt: 9, el: <Ic s={22} v={22}><path d="M8 20l8-13" stroke="#777" strokeWidth="2.400" /><path d="M11 2h8l-2 4h-6z" fill="#666" /><path d="M3 8c4 0 6 4 9 8" stroke="#888" strokeWidth="2.400" /><circle cx="6" cy="18" r="3" fill="#f0962a" /></Ic> },
];

const Combo: React.FC<{ children: React.ReactNode }> = ({ children }) => <Field><FieldMain>{children}</FieldMain><Caret $s={4} /></Field>;
const UnitField: React.FC<{ children: React.ReactNode }> = ({ children }) => <Field><FieldMain>{children}</FieldMain><Unit>mm</Unit><Caret $s={4} /></Field>;
const ValIcon = () => <Ic s={14}><Cube t="#dfe3ea" l="#a8bce4" r="#c4c8d0" k="#667" /><path d="M6 13V8" stroke="#d42020" strokeWidth="1.400" /></Ic>;

const Sec: React.FC<{ title: string; pb?: number; children?: React.ReactNode }> = ({ title, pb = 6, children }) => (
  <Section>
    <SecHead $closed={!children}>{title}<SecIcon><Chevron up={!!children} /></SecIcon></SecHead>
    {children ? <SecBody $pb={pb}>{children}</SecBody> : null}
  </Section>
);

const Scene = () => (
  <Canvas width={1494} height={791} viewBox="230 233 1494 791">
    <defs>
      <radialGradient id="ball" cx="0.35" cy="0.3" r="0.8"><stop offset="0" stopColor="#f2dc9c" /><stop offset="1" stopColor="#8f7436" /></radialGradient>
      <radialGradient id="ballB" cx="0.35" cy="0.3" r="0.8"><stop offset="0" stopColor="#38c0ff" /><stop offset="1" stopColor="#0060c8" /></radialGradient>
    </defs>
    <polygon points="1205,369 1270,479.500 1159,864 1094,753.500" fill="#4a95cf" stroke="#223" strokeWidth="0.600" />
    <polygon points="1205,369 1241.500,430 1241.500,473 1178,459" fill="#4080bd" />
    <polygon points="597.500,645 664,755.500 1159,864 1094,753.500" fill="#2d5777" stroke="#223" strokeWidth="0.600" />
    <polygon points="597.500,645 664,755.500 690,664.500" fill="#284f70" />
    <polygon points="709.500,260.400 1205,369 1094,753.500 597.500,645" fill="#84f0ff" stroke="#334" strokeWidth="0.800" />
    <polygon points="709.500,260.400 775,371.400 690,664.500 597.500,645" fill="#7ae9fc" />
    <polygon points="709.500,260.400 1205,369 1178,459 775,371.400" fill="#76dfef" />
    <polygon points="775,371.400 1178,459 1094,753.500 690,664.500" fill="#84f0ff" />
    <polygon points="709.500,260.400 1205,369 1094,753.500 597.500,645" fill="none" stroke="#334" strokeWidth="0.800" />
    <polygon points="858,512.700 971,507.800 1037,617.500 905,589.400" fill="#7ce8f7" />
    <polygon points="905,589.400 1037,617.500 1030,645 898,615.500" fill="#75deee" />
    <polygon points="839.400,479.600 832,506 898,615.500 905,589.400" fill="#4d95cf" />
    <polygon points="839.400,479.600 971,507.800 963.800,535 858,512.700" fill="#2c5576" stroke="#334" strokeWidth="0.500" />
    <polygon points="839.400,479.600 858,512.700 832,506" fill="#4d95cf" stroke="#334" strokeWidth="0.500" />
    <polygon points="807,425 1029.600,473.500 995.400,589.800 773.600,541" fill="none" stroke="#ff9f45" strokeWidth="2.500" strokeLinejoin="round" />
    <polygon points="1029.600,472.500 1029.600,474.500 966.700,462 966.700,457" fill="#a88f56" />
    <polygon points="950,455 967,456 967,463.500" fill="#b49a5e" />
    <line x1="1006" y1="442" x2="971" y2="513.500" stroke="#a89a60" strokeWidth="0.800" />
    <line x1="901.800" y1="507" x2="967.600" y2="617.500" stroke="#7a6a3a" strokeWidth="1.600" />
    <circle cx="901.800" cy="507" r="4.200" fill="url(#ball)" />
    <circle cx="967.600" cy="617.500" r="4.200" fill="#d2b86e" />
    <line x1="967" y1="521" x2="1014" y2="532" stroke="#1ea0e8" strokeWidth="2.400" />
    <line x1="1014" y1="532" x2="1150" y2="561.500" stroke="#a8995c" strokeWidth="2" />
    <polygon points="1148,557 1166,565.500 1146,566" fill="#b49a5e" />
    <circle cx="967" cy="521" r="4.200" fill="url(#ballB)" />
    <g stroke="#f01c2c" strokeWidth="2" fill="none" strokeLinejoin="round" strokeLinecap="round">
      <path d="M961.700 524.700C968 530 972 534 978.300 536C986 537 1003 535 1011.700 536.700C1014 535 1016 533 1017.300 530" />
      <path d="M1011.700 536.700C1018 543 1021 548 1026.700 550C1032 553 1038 554 1043.300 556.700L1065 565.700C1080 566 1100 566 1115 565.700L1148.300 562.300" />
      <polyline points="968.300,551 985,550 970,564.300 1000,565" />
      <path d="M1068.300 579C1061 580 1053 590 1049.500 599C1047.500 605 1056 611 1060 608.300C1065 604 1069 599 1066.700 596.700C1062 593 1054 594 1050 597" />
    </g>
    <g>
      <polygon points="294,959 326,970 318.500,995 289,984" fill="#cfd0d3" stroke="#b4b5b8" />
      <polygon points="298,965 321,972 315,990 293,982" fill="none" stroke="#bcbdc0" />
      <line x1="298" y1="956" x2="326" y2="963" stroke="#d42828" strokeWidth="2.400" />
      <polygon points="322,958 335,965 321,966" fill="#d42828" />
      <line x1="298" y1="956" x2="288" y2="990" stroke="#3fae4a" strokeWidth="3" />
      <polygon points="283,988 293,991 285,1002" fill="#3fae4a" />
      <circle cx="298" cy="956" r="4" fill="#eee" stroke="#aaa" strokeWidth="0.500" />
      <text x="336" y="973" fontSize="11" fill="#d42828" fontFamily="Liberation Sans">X</text>
      <text x="277" y="1007" fontSize="11" fill="#3fae4a" fontFamily="Liberation Sans">Y</text>
      <text x="301" y="975" fontSize="10" fill="#a8b8e8" fontFamily="Liberation Sans">Z</text>
    </g>
  </Canvas>
);

export default function App() {
  return (
    <>
      <Global />
      <Frame>
        <MonthBadge>11月</MonthBadge>
        <TitleBar>
          <Logo>NX</Logo><VSep />
          <Slot $w={29} $ml={2}><I n="save" s={15} /></Slot><VSep />
          <Slot $w={28}><I n="undo" s={15} /></Slot><Slot $w={8}><Caret /></Slot>
          <Slot $w={25}><I n="redo" s={14} /></Slot><VSep />
          <Slot $w={30}><I n="cut" s={15} /></Slot><Slot $w={17}><I n="copy" s={14} /></Slot><Slot $w={29}><I n="paste" s={15} /></Slot><VSep />
          <Slot $w={27}><I n="books" s={15} /></Slot><Slot $w={8}><Caret /></Slot><Slot $w={4} /><VSep />
          <Slot $w={29}><I n="brush" s={15} /></Slot><VSep />
          <Slot $w={26}><I n="switch" s={15} /></Slot><QuickText $w={44}>切换窗口</QuickText>
          <Slot $w={26}><I n="window" s={15} /></Slot><QuickText $w={22}>窗口</QuickText>
          <Slot $w={12}><Caret /></Slot><OverflowCaret><Caret /></OverflowCaret>
          <AppTitle>NX 12 - 建模</AppTitle>
          <RightGroup>
            <Siemens>SIEMENS</Siemens>
            <WinBtn><Ic s={9} v={9}><rect x="0" y="7" width="8" height="2" fill="#555" /></Ic></WinBtn>
            <WinBtn $ml={14}><Ic s={12} v={12}><rect x="0.500" y="0.500" width="11" height="11" stroke="#333" strokeWidth="1.200" /></Ic></WinBtn>
            <WinBtn $ml={12}><Ic s={12} v={12}><path d="M1 1l10 10M11 1L1 11" stroke="#333" strokeWidth="1.400" /></Ic></WinBtn>
          </RightGroup>
        </TitleBar>
        <TabRow>
          <FileTab>文件(F)</FileTab>
          <RibbonTab $active>主页</RibbonTab>
          {["装配", "曲线", "曲面", "分析", "视图", "渲染", "工具"].map(t => <RibbonTab key={t}>{t}</RibbonTab>)}
          <RibbonTab $w={78}>应用模块</RibbonTab>
          <SearchBox>查找命令<Ic s={15}><circle cx="10" cy="6" r="4.500" stroke="#444" strokeWidth="1.200" /><path d="M7 9.500l-5 5" stroke="#444" strokeWidth="2" /></Ic></SearchBox>
          <TabTools>
            <I n="fullscreen" s={16} />
            <Ic s={14}><path d="M2 8l6-6 6 6M2 13l6-6 6 6" stroke="#222" strokeWidth="1.300" /></Ic>
            <Ic s={14}><circle cx="7" cy="7" r="6.800" fill="#4a78d8" /><text x="7" y="11" fontSize="11" fontWeight="700" textAnchor="middle" fill="#fff" fontFamily="Liberation Sans">?</text></Ic>
          </TabTools>
        </TabRow>
        <Ribbon>
          <Group $w={57}>
            <GroupBody><Big $w={56}><BigIcon><SketchBig /></BigIcon><BigText>直接草图</BigText><BigCaret><Caret /></BigCaret></Big></GroupBody>
            <GroupFoot />
          </Group>
          <Group $w={677}>
            <GroupBody $pl={3}>
              <Big $w={47}><BigIcon><GlobeBig /></BigIcon><BigText>启动</BigText><BigCaret><Caret /></BigCaret></Big>
              <Big $w={47}><BigIcon><SketchBig /></BigIcon><BigText>任务草图</BigText></Big>
              <Big $w={60}><BigIcon><LayersBig /></BigIcon><BigText>图层设置</BigText></Big>
              <Big $w={32}><BigIcon><EqBig /></BigIcon><BigText>表达式</BigText></Big>
              <Big $w={62}><BigIcon><PlaneBig /></BigIcon><BigText>基准平面</BigText><BigCaret><Caret /></BigCaret></Big>
              {colsA.map(([w, cs], i) => <SmallCol key={i} $w={w} $ml={i === 0 ? 16 : 0}>{cs.map(c => <Small key={c[1]} c={c} />)}</SmallCol>)}
              <MoreBtn $w={38}><MoreBox><I n="moreA" s={18} /></MoreBox><MoreText>更多</MoreText><BigCaret><Caret /></BigCaret></MoreBtn>
            </GroupBody>
            <GroupFoot>特征<Launcher><Caret /></Launcher></GroupFoot>
          </Group>
          <Group $w={192}>
            <GroupBody $pl={12}>
              {colsB.map(([w, cs], i) => <SmallCol key={i} $w={w}>{cs.map(c => <Small key={c[1]} c={c} />)}</SmallCol>)}
              <MoreBtn $w={38}><MoreBox><I n="moreB" s={16} /></MoreBox><MoreText>更多</MoreText><BigCaret><Caret /></BigCaret></MoreBtn>
            </GroupBody>
            <GroupFoot>同步建模<Launcher><Caret /></Launcher></GroupFoot>
          </Group>
          <Group $w={43}>
            <GroupBody><Big $w={42}><BigIcon><AsmBig /></BigIcon><BigText>装配</BigText><BigCaret><Caret /></BigCaret></Big></GroupBody>
            <GroupFoot />
          </Group>
          <Group $grow $plain><GroupBody /><GroupFoot><Launcher><Caret /></Launcher></GroupFoot></Group>
        </Ribbon>
        <Toolbar>
          <I n="menu" s={15} /><MenuText>菜单(M)</MenuText><Slot $w={14}><Caret /></Slot><VSep />
          <ToolCombo $w={133} $ml={12}>无选择过滤器<Caret $s={4} /></ToolCombo>
          <ToolCombo $w={140} $ml={9}>仅在工作部件内<Caret $s={4} /></ToolCombo>
          <Tools list={toolsA} />
          <ToolCombo $w={140} $ml={7}>相连曲线<Caret $s={4} /></ToolCombo>
          <Slot $w={3} />
          <Tools list={toolsB} />
          <VSep $ml={8} />
          <Tools list={toolsC} />
          <VSep $ml={5} />
          <ToolEnd><Caret /></ToolEnd>
        </Toolbar>
        <StatusRow>
          <StatusText $w={812}>选择截面几何图形</StatusText>
          <StatusText>将不执行任何布尔运算。</StatusText>
          <StatusIcons><I n="flagGray" s={16} /><I n="fullscreen" s={16} /></StatusIcons>
        </StatusRow>
        <Main>
          <Strip>
            {Strips.map((s, i) => <StripItem key={i} $mt={s.mt} $h={s.h} $active={s.active}>{s.el}</StripItem>)}
          </Strip>
          <Nav>
            <NavTitle>部件导航器<MaxSquare /></NavTitle>
            <Tree>
              <TreeHead>名称<UpTri /></TreeHead>
              <Rows>
                {Array.from({ length: 34 }).map((_, i) => <Row key={i} $odd={i % 2 === 1}>{treeRows[i]}</Row>)}
              </Rows>
              <ScrollRow><Thumb /></ScrollRow>
              <TreeLines width={177} height={110}>
                <path d="M9.500 37V92M13 32h3M13 52h3M9 72h8M13 92h4M27 100v12M27 112h10" stroke="#aaa" strokeDasharray="1 1" fill="none" />
              </TreeLines>
            </Tree>
            <SplitBar />
            <NavSection>相关性<Chevron /></NavSection>
            <NavSection>细节<Chevron /></NavSection>
            <NavSection>预览<Chevron /></NavSection>
          </Nav>
          <Right>
            <DocTabs>
              <DocTab>
                <Ic s={15}><path d="M2 5l5-3v8l6-2v4l-6 2-5-3z" fill="#2a5ad0" stroke="#d8e8fa" strokeWidth="0.800" /></Ic>
                1.prt
                <Ic s={12}><path d="M2 1h6l2 2v8H2z" stroke="#fff" strokeWidth="1.400" /><path d="M6 8l5-4" stroke="#fff" strokeWidth="1.400" /></Ic>
                <Ic s={10}><path d="M2 2l10 10M12 2L2 12" stroke="#b8dbe6" strokeWidth="2" /></Ic>
              </DocTab>
            </DocTabs>
            <View>
              <Scene />
              <Popup>
                <Grip />开始
                <PopupField>-2<Caret $s={4} /></PopupField>
              </Popup>
              <Dialog>
                <DlgHead>
                  <Gear c="#fff" s={14} />拉伸
                  <DlgHeadIcons>
                    <Ic s={13}><path d="M13 8a5.500 5.500 0 1 1-3-5" stroke="#fff" strokeWidth="1.800" /><path d="M6 1l4 2-2 3" stroke="#fff" strokeWidth="1.500" /></Ic>
                    <Ic s={12}><path d="M2 2l12 12M14 2L2 14" stroke="#fff" strokeWidth="2.600" /></Ic>
                  </DlgHeadIcons>
                </DlgHead>
                <DlgBody>
                  <Sec title="表区域驱动">
                    <FormRow $h={32}>
                      <Highlight><Check />选择曲线 (4)</Highlight>
                      <IconBtn><SwapIcon /></IconBtn>
                      <IconBtn><Ic s={18}><rect x="3" y="4" width="11" height="11" stroke="#555" strokeDasharray="1.500 1" /><rect x="6" y="7" width="6" height="5" stroke="#444" /><circle cx="13" cy="4" r="2.500" fill="#f8e860" /></Ic></IconBtn>
                      <IconBtn $s={32} $h={32} $yellow><Ic s={26} v={26}><path d="M3 1v22M18 3v20" stroke="#1a30c8" strokeWidth="1.200" strokeDasharray="4 2" /><circle cx="18" cy="15" r="4" stroke="#1a30c8" strokeWidth="1.200" /><path d="M1 4c10 0 20 4 24 20" stroke="#d82a20" strokeWidth="1.600" /></Ic></IconBtn>
                    </FormRow>
                    <FormRow $h={32}>
                      <RowLabel>指定原始曲线</RowLabel>
                      <IconBtn $s={32} $h={32}><Ic s={24} v={24}><path d="M3 20c8 0 12-8 5-15" stroke="#222" strokeWidth="1.200" /><circle cx="8" cy="4" r="2" fill="#d82020" /><path d="M8 4l12 4" stroke="#d82020" strokeWidth="1.200" /><polygon points="22,9 16,5 16,9" fill="#d82020" /></Ic></IconBtn>
                    </FormRow>
                  </Sec>
                  <Sec title="方向">
                    <FormRow $h={32}>
                      <CheckLabel><Check />指定矢量</CheckLabel>
                      <IconBtn><SwapIcon /></IconBtn>
                      <IconBtn><Ic s={18}><path d="M10 14V2" stroke="#d82020" strokeWidth="1.400" /><polygon points="10,0 7,5 13,5" fill="#d82020" /><path d="M2 7c0 5 3 7 7 6" stroke="#f09020" strokeWidth="1.800" /><path d="M12 15h1M14.500 15h1M17 15h1" stroke="#111" strokeWidth="1.500" /></Ic></IconBtn>
                      <SplitBtn>
                        <SplitMain><Ic s={26} v={26}><polygon points="10,13 18,9 24,12 24,22 10,22" fill="#fff" stroke="#222" /><rect x="12" y="10" width="5" height="12" rx="2" fill="#fff" stroke="#222" /><path d="M16 12V2" stroke="#d82020" strokeWidth="1.600" /><polygon points="16,0 13,5 19,5" fill="#d82020" /><path d="M12 16L2 22" stroke="#d82020" strokeWidth="1.600" /><polygon points="0,23 4,18 7,22" fill="#d82020" /></Ic></SplitMain>
                        <SplitArrow><Caret /></SplitArrow>
                      </SplitBtn>
                    </FormRow>
                  </Sec>
                  <Sec title="限制" pb={10}>
                    <FormRow $h={26}><RowLabel>开始</RowLabel><Combo><ValIcon />值</Combo></FormRow>
                    <FormRow $h={25}><RowLabel>距离</RowLabel><UnitField>0</UnitField></FormRow>
                    <FormRow $h={25}><RowLabel>结束</RowLabel><Combo><ValIcon />值</Combo></FormRow>
                    <FormRow $h={25}><RowLabel>距离</RowLabel><UnitField>15</UnitField></FormRow>
                    <CheckRow><CheckBox />开放轮廓智能体</CheckRow>
                  </Sec>
                  <Sec title="布尔">
                    <FormRow $h={26}><RowLabel>布尔（无）</RowLabel><Combo><Ic s={14}><path d="M1 13L6 6" stroke="#222" strokeWidth="1.200" /><path d="M5 2l2 2" stroke="#e8a020" /><rect x="3" y="8" width="7" height="6" stroke="#222" fill="#fff" /><circle cx="9" cy="6" r="4" stroke="#222" /></Ic>自动判断</Combo></FormRow>
                    <FormRow $h={32}><RowLabel>选择体 (0)</RowLabel><IconBtn $s={32} $h={32}><Ic s={22}><Cube t="#ffe05a" l="#ffb020" r="#f89018" k="#e84a10" /></Ic></IconBtn></FormRow>
                  </Sec>
                  <Sec title="拔模" />
                  <Sec title="偏置">
                    <FormRow $h={25}><RowLabel>偏置</RowLabel><Combo>两侧</Combo></FormRow>
                    <FormRow $h={25}><RowLabel>开始</RowLabel><UnitField><Sel>-2</Sel></UnitField></FormRow>
                    <FormRow $h={25}><RowLabel>结束</RowLabel><UnitField>6</UnitField></FormRow>
                  </Sec>
                  <Sec title="设置" />
                  <Sec title="预览" />
                </DlgBody>
                <DlgFoot>
                  <Btn $primary>&lt; 确定 &gt;</Btn>
                  <Btn>应用</Btn>
                  <Btn>取消</Btn>
                </DlgFoot>
              </Dialog>
              <Watermark>CSDN @划水猫</Watermark>
            </View>
          </Right>
        </Main>
        <Bottom />
      </Frame>
    </>
  );
}
